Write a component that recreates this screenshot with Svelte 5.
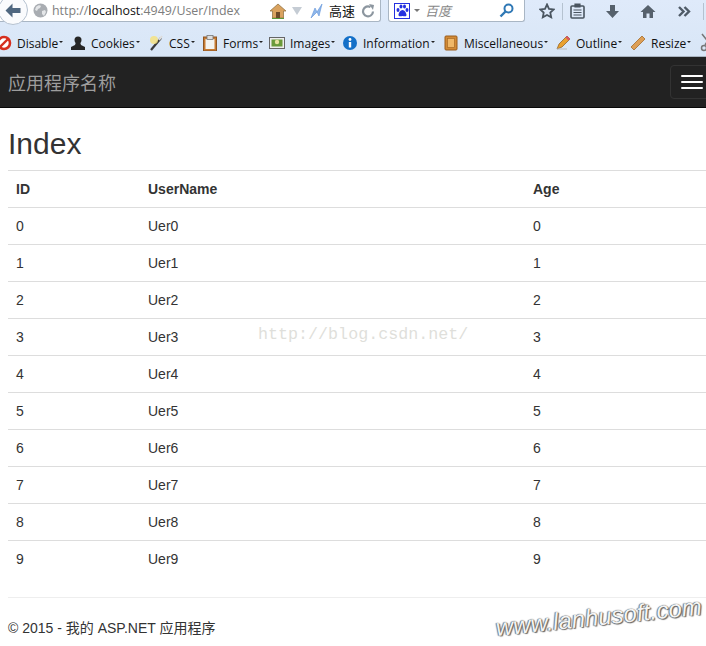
<script>
  const rows = Array.from({ length: 10 }, (_, i) => ({ id: i, name: `Uer${i}`, age: i }));
  const tools = [
    { key: 'disable', label: 'Disable', width: 74 },
    { key: 'cookies', label: 'Cookies', width: 78 },
    { key: 'css', label: 'CSS', width: 54 },
    { key: 'forms', label: 'Forms', width: 67 },
    { key: 'images', label: 'Images', width: 73 },
    { key: 'info', label: 'Information', width: 101 },
    { key: 'misc', label: 'Miscellaneous', width: 112 },
    { key: 'outline', label: 'Outline', width: 75 },
    { key: 'resize', label: 'Resize', width: 67 }
  ];
</script>

<div class="page">
  <header class="chrome">
    <div class="nav-row">
      <div class="url-bar">
        <span class="back">
          <svg width="16" height="15" viewBox="0 0 16 15"><path d="M7.500 .5 .5 7.500l7 7V10H15.500V5H7.500z" fill="#4f6780"/></svg>
        </span>
        <svg class="globe" width="15" height="15" viewBox="0 0 15 15">
          <circle cx="7.500" cy="7.500" r="7" fill="#a9adb2"/>
          <path d="M3 4c2-2 4-2 5-1L7 5 5 6 4 8 2 7zM9 8l3-1 1 2-2 4-2-2z" fill="#e4e6e8"/>
        </svg>
        <span class="url">http://<b>localhost</b>:4949/User/Index</span>
        <svg class="house" width="18" height="16" viewBox="0 0 18 16">
          <path d="M9 1 1 8h2.500v7h11V8H17z" fill="#d9a25f" stroke="#8a6a3a" stroke-width=".7"/>
          <path d="M3 15h12v1H3z" fill="#5b9a3c"/>
          <path d="M7 9h4v6H7z" fill="#6b4a2a"/>
        </svg>
        <span class="drop"></span>
        <svg class="bolt" width="13" height="16" viewBox="0 0 13 16">
          <path d="M1 15 5 5l2 4 5-8-3 12-2-4z" fill="#8fb7ea" stroke="#5f92d8" stroke-width=".6"/>
        </svg>
        <span class="speed">高速</span>
        <svg class="reload" width="14" height="14" viewBox="0 0 14 14">
          <path d="M12 7.500A5 5 0 1 1 9.500 3" fill="none" stroke="#8c969f" stroke-width="2.200"/>
          <path d="M8 0l5 1-1 5z" fill="#8c969f"/>
        </svg>
      </div>
      <div class="search">
        <span class="paw">
          <svg width="13" height="13" viewBox="0 0 13 13" fill="#2430e0">
            <ellipse cx="2" cy="6" rx="1.500" ry="2"/><ellipse cx="5" cy="2.500" rx="1.500" ry="2"/>
            <ellipse cx="8.500" cy="2.500" rx="1.500" ry="2"/><ellipse cx="11" cy="6" rx="1.500" ry="2"/>
            <path d="M6.500 6c2 0 4 3 4 5 0 2-2.500 1-4 1s-4 1-4-1c0-2 2-5 4-5z"/>
          </svg>
        </span>
        <span class="caret grey"></span>
        <span class="engine">百度</span>
        <svg class="lens" width="15" height="15" viewBox="0 0 15 15">
          <circle cx="9.500" cy="5.500" r="4" fill="none" stroke="#2f78b5" stroke-width="2"/>
          <path d="M6.500 8.500 1.500 13.500" stroke="#2f78b5" stroke-width="2.400"/>
        </svg>
      </div>
      <div class="actions">
        <svg width="16" height="16" viewBox="0 0 16 16">
          <path d="M8 1.500l2 4.300 4.700.6-3.400 3.200.9 4.700L8 12l-4.200 2.300.9-4.700L1.300 6.400 6 5.800z" fill="none" stroke="#4a5560" stroke-width="1.800"/>
        </svg>
        <i class="sep"></i>
        <svg width="15" height="16" viewBox="0 0 15 16">
          <path d="M2 3h11a1 1 0 0 1 1 1v10a1 1 0 0 1-1 1H2a1 1 0 0 1-1-1V4a1 1 0 0 1 1-1z" fill="none" stroke="#4a5560" stroke-width="1.600"/>
          <path d="M5 1h5v3H5zM3.500 7h8M3.500 9.500h8M3.500 12h8" stroke="#4a5560" stroke-width="1.200" fill="#4a5560"/>
        </svg>
        <svg width="15" height="15" viewBox="0 0 15 15"><path d="M5 1h5v6h4l-6.500 7L1 7h4z" fill="#56616c"/></svg>
        <svg width="16" height="15" viewBox="0 0 16 15">
          <path d="M8 1 0.500 8H3v6h3.500V9.500h3V14H13V8h2.500z" fill="#56616c"/>
        </svg>
        <svg class="more" width="13" height="11" viewBox="0 0 13 11">
          <path d="M1 1l4.500 4.500L1 10M6.500 1 11 5.500 6.500 10" fill="none" stroke="#4f5b67" stroke-width="2.400"/>
        </svg>
        <i class="sep last"></i>
      </div>
    </div>

    <div class="tool-row">
      {#each tools as tool}
        <span class="tool" style="width: {tool.width}px">
          <svg width="16" height="16" viewBox="0 0 16 16">
            {#if tool.key === 'disable'}
              <circle cx="8" cy="8" r="6" fill="#fff" stroke="#d62f1f" stroke-width="2.600"/>
              <path d="M4 12 12 4" stroke="#d62f1f" stroke-width="2.400"/>
            {:else if tool.key === 'cookies'}
              <circle cx="8" cy="5" r="3.500" fill="#262626"/>
              <path d="M6 7h4l1 3 4 2v3H1v-3l4-2z" fill="#262626"/>
            {:else if tool.key === 'css'}
              <path d="M3 15 13 3" stroke="#3a3a3a" stroke-width="2.200"/>
              <path d="M11 5 14 1" stroke="#ddd" stroke-width="2"/>
              <circle cx="6" cy="5" r="4" fill="#f6e27a" opacity=".8"/>
            {:else if tool.key === 'forms'}
              <rect x="1.500" y="2" width="13" height="14" fill="#c77b32" stroke="#8d5522"/>
              <rect x="3.500" y="4" width="9" height="10" fill="#f4f4f0"/>
              <rect x="5" y="0.500" width="6" height="4" fill="#ddd" stroke="#777" stroke-width=".8"/>
            {:else if tool.key === 'images'}
              <rect x=".5" y="2.500" width="15" height="11" fill="#eee" stroke="#666"/>
              <rect x="2.500" y="4.500" width="11" height="7" fill="#6a9a3a"/>
              <circle cx="8" cy="7" r="2.200" fill="#e8e2a0"/>
            {:else if tool.key === 'info'}
              <circle cx="8" cy="8" r="7" fill="#1470c8"/>
              <circle cx="8" cy="4.500" r="1.400" fill="#fff"/>
              <rect x="6.800" y="7" width="2.400" height="5.500" fill="#fff"/>
            {:else if tool.key === 'misc'}
              <rect x="2" y="1" width="12" height="14" rx="1" fill="#d28a35" stroke="#9a5c1c"/>
              <rect x="4.500" y="3.500" width="7" height="9" fill="#f0b868" stroke="#a86a26" stroke-width=".7"/>
            {:else if tool.key === 'outline'}
              <path d="M2 14 4 9 12 1l3 3-8 8z" fill="#e9a12f" stroke="#8a5a1c" stroke-width=".7"/>
              <path d="M12 1l3 3-1.500 1.500-3-3z" fill="#d9546a"/>
              <path d="M2 14h10" stroke="#bbb"/>
            {:else}
              <path d="M1 12 12 1l3 3L4 15z" fill="#dd9f56" stroke="#a56c2a" stroke-width=".8"/>
            {/if}
          </svg>
          <span class="tool-label">{tool.label}</span><span class="caret"></span>
        </span>
      {/each}
      <svg class="scissors" width="14" height="20" viewBox="0 0 14 20">
        <path d="M2 1l8 10M12 1 5 12" stroke="#777" stroke-width="1.500" fill="none"/>
        <circle cx="4" cy="15" r="2.500" fill="none" stroke="#777" stroke-width="1.500"/>
      </svg>
    </div>
  </header>

  <nav class="navbar">
    <span class="brand">应用程序名称</span>
    <button class="toggle" aria-label="menu">
      <span></span><span></span><span></span>
    </button>
  </nav>

  <main class="content">
    <h2>Index</h2>
    <table>
      <thead>
        <tr><th class="c1">ID</th><th class="c2">UserName</th><th>Age</th></tr>
      </thead>
      <tbody>
        {#each rows as row}
          <tr><td>{row.id}</td><td>{row.name}</td><td>{row.age}</td></tr>
        {/each}
      </tbody>
    </table>
    <hr />
    <footer>© 2015 - 我的 ASP.NET 应用程序</footer>
  </main>

  <span class="mark-csdn">http://blog.csdn.net/</span>
  <span class="mark-site">www.lanhusoft.com</span>
</div>

<style>
  :global(body) {
    background: #fff;
  }
  .page {
    position: relative;
    width: 706px;
    height: 646px;
    overflow: hidden;
    font-family: "Liberation Sans", "Noto Sans CJK SC", sans-serif;
    font-size: 14px;
    color: #333;
  }
  .chrome {
    height: 57px;
    background: linear-gradient(#dfeafa, #d8e6f6);
    box-sizing: border-box;
    border-bottom: 1px solid #a9b4c0;
    font-family: "Open Sans", "Noto Sans CJK SC", sans-serif;
  }
  .nav-row {
    display: flex;
    height: 22px;
  }
  .url-bar {
    position: relative;
    display: flex;
    align-items: center;
    width: 381px;
    box-sizing: border-box;
    padding-left: 33px;
    background: #fff;
    border-bottom: 1px solid #a9b6c4;
    border-right: 1px solid #a9b6c4;
    border-radius: 0 0 3px 0;
  }
  .back {
    position: absolute;
    left: -2px;
    top: -5px;
    width: 30px;
    height: 30px;
    display: flex;
    align-items: center;
    justify-content: center;
    background: #fafbfd;
    border: 1px solid #b6c2d0;
    border-radius: 50%;
    box-sizing: border-box;
  }
  .url {
    margin-left: 4px;
    width: 218px;
    font-size: 12.400px;
    color: #7d7d7d;
    white-space: nowrap;
  }
  .url b {
    font-weight: 400;
    color: #111;
  }
  .house {
    margin-left: -1px;
  }
  .drop {
    width: 0;
    height: 0;
    margin-left: 5px;
    border-left: 5px solid transparent;
    border-right: 5px solid transparent;
    border-top: 8px solid #c5ccd4;
  }
  .bolt {
    margin-left: 8px;
  }
  .speed {
    margin-left: 6px;
    font-size: 13px;
    color: #111;
  }
  .reload {
    margin-left: 6px;
  }
  .search {
    display: flex;
    align-items: center;
    width: 137px;
    margin-left: 7px;
    box-sizing: border-box;
    padding: 0 10px 0 5px;
    background: #fff;
    border: 1px solid #a9b6c4;
    border-top: 0;
    border-radius: 0 0 3px 3px;
  }
  .paw {
    display: flex;
    align-items: center;
    justify-content: center;
    width: 14px;
    height: 14px;
    border: 1px solid #2430e0;
  }
  .caret {
    display: inline-block;
    width: 0;
    height: 0;
    margin: 0 0 2px 1px;
    vertical-align: middle;
    border-left: 2px solid transparent;
    border-right: 2px solid transparent;
    border-top: 2px solid #222;
  }
  .caret.grey {
    margin: 0 0 0 4px;
    border-left-width: 3px;
    border-right-width: 3px;
    border-top: 3px solid #777;
  }
  .engine {
    flex: 1;
    margin-left: 5px;
    font-size: 13px;
    font-style: italic;
    color: #888;
  }
  .actions {
    position: relative;
    display: flex;
    align-items: center;
    flex: 1;
    padding-left: 14px;
  }
  .actions svg:nth-of-type(2) {
    margin-left: 7px;
  }
  .actions svg:nth-of-type(3) {
    margin-left: 20px;
  }
  .actions svg:nth-of-type(4) {
    margin-left: 20px;
  }
  .sep {
    flex: none;
    width: 1px;
    height: 17px;
    margin-left: 7px;
    background: #b5c2d0;
  }
  .actions svg.more {
    margin-left: 22px;
  }
  .sep.last {
    margin-left: 12px;
  }
  .tool-row {
    display: flex;
    align-items: center;
    height: 34px;
    box-sizing: border-box;
    margin-left: -4px;
    padding-top: 8px;
    font-size: 12px;
    color: #111;
    white-space: nowrap;
  }
  .tool {
    display: flex;
    align-items: center;
    flex: none;
  }
  .tool-label {
    margin-left: 5px;
  }
  .scissors {
    flex: none;
    margin-left: 3px;
  }
  .navbar {
    display: flex;
    align-items: center;
    justify-content: space-between;
    height: 51px;
    box-sizing: border-box;
    padding: 0 0 1px 8px;
    background: #222;
    border-bottom: 1px solid #080808;
  }
  .brand {
    font-size: 18px;
    color: #9d9d9d;
  }
  .toggle {
    display: flex;
    flex-direction: column;
    gap: 4px;
    flex: none;
    width: 44px;
    height: 34px;
    margin-right: -8px;
    padding: 9px 10px;
    box-sizing: border-box;
    background: transparent;
    border: 1px solid #333;
    border-radius: 4px;
  }
  .toggle span {
    display: block;
    width: 22px;
    height: 2px;
    background: #fff;
    border-radius: 1px;
  }
  .content {
    padding-left: 8px;
  }
  h2 {
    margin: 19px 0 10px;
    font-size: 30px;
    font-weight: 500;
    line-height: 33px;
    color: #333;
  }
  table {
    width: 698px;
    border-collapse: collapse;
    table-layout: fixed;
  }
  th,
  td {
    height: 37px;
    box-sizing: border-box;
    padding: 8px;
    text-align: left;
    line-height: 20px;
    border-top: 1px solid #ddd;
  }
  thead th {
    border-bottom: 1px solid #ddd;
  }
  tbody tr:first-child td {
    border-top: 0;
  }
  .c1 {
    width: 132px;
  }
  .c2 {
    width: 385px;
  }
  hr {
    margin: 19px 0 20px;
    border: 0;
    border-top: 1px solid #eee;
  }
  footer {
    line-height: 20px;
  }
  .mark-csdn {
    position: absolute;
    left: 258px;
    top: 325px;
    font-family: "Liberation Mono", monospace;
    font-size: 16.700px;
    color: #dfdfdb;
  }
  .mark-site {
    position: absolute;
    left: 496px;
    top: 614px;
    font-size: 24px;
    font-style: italic;
    color: #f4f4f4;
    white-space: nowrap;
    transform: rotate(-6deg);
    transform-origin: left center;
    text-shadow: 0 0 1px #444, 1px 1px 1px #666, -1px 0 1px #888;
  }
</style>
